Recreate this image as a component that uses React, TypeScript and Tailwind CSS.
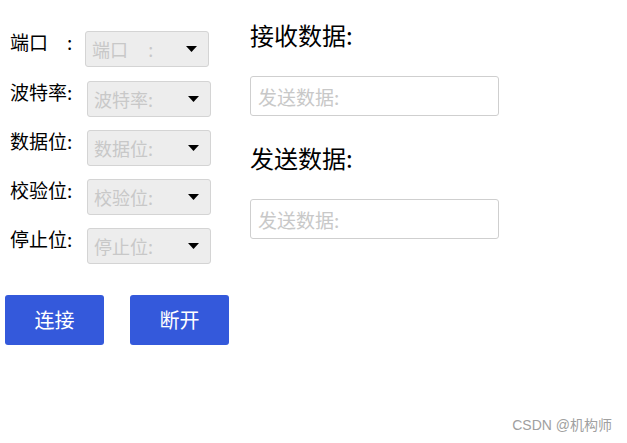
import React from "react";

const font = { fontFamily: '"Noto Sans CJK SC", "Noto Sans", sans-serif' };

function Arrow() {
  return (
    <svg width="11" height="6" viewBox="0 0 11 6" className="shrink-0">
      <path d="M0 0 L11 0 L5.5 6 Z" fill="#000" />
    </svg>
  );
}

function FakeSelect({ text }: { text: string }) {
  return (
    <div className="flex h-[36px] w-[124px] items-center justify-between rounded-[3px] border border-[#d4d4d4] bg-[#ededed] pl-[6px] pr-[11px]">
      <span className="whitespace-pre text-[18px] leading-none text-[#c8c8c8]">{text}</span>
      <Arrow />
    </div>
  );
}

const rows = [
  { label: "波特率:", ph: "波特率:" },
  { label: "数据位:", ph: "数据位:" },
  { label: "校验位:", ph: "校验位:" },
  { label: "停止位:", ph: "停止位:" },
];

export default function App() {
  return (
    <div className="relative h-[443px] w-[627px] bg-white text-black" style={font}>
      <div className="flex">
        {/* left: serial settings */}
        <div className="flex flex-col pl-[5px] pt-[31px]">
          <div className="flex items-start pl-[5px]">
            <span className="mt-px flex w-[75px] text-[19px] leading-none">
              <span>端口</span>
              <span className="ml-[19px]">:</span>
            </span>
            <FakeSelect text={"端口     :"} />
          </div>
          {rows.map((r, i) => (
            <div key={r.label} className={`flex items-start pl-[5px] ${i === 0 ? "mt-[14px]" : "mt-[13px]"}`}>
              <span className="mt-px w-[77px] text-[19px] leading-none">{r.label}</span>
              <FakeSelect text={r.ph} />
            </div>
          ))}
          <div className="mt-[31px] flex gap-[26px]">
            <button className="flex h-[50px] w-[99px] items-center justify-center rounded-[3px] bg-[#3459db] text-[20px] leading-none text-white">
              连接
            </button>
            <button className="flex h-[50px] w-[99px] items-center justify-center rounded-[3px] bg-[#3459db] text-[20px] leading-none text-white">
              断开
            </button>
          </div>
        </div>

        {/* right: data */}
        <div className="ml-[21px] flex flex-col pt-[23px]">
          <h2 className="text-[24px] leading-none">接收数据:</h2>
          <input
            className="mt-[29px] h-[40px] w-[249px] rounded-[3px] border border-[#cfcfcf] px-[7px] text-[19px] outline-none placeholder:text-[#c8c8c8]"
            placeholder="发送数据:"
            style={font}
          />
          <h2 className="mt-[30px] text-[24px] leading-none">发送数据:</h2>
          <input
            className="mt-[29px] h-[40px] w-[249px] rounded-[3px] border border-[#cfcfcf] px-[7px] text-[19px] outline-none placeholder:text-[#c8c8c8]"
            placeholder="发送数据:"
            style={font}
          />
        </div>
      </div>

      {/* watermark */}
      <div
        className="absolute right-[15px] top-[418px] text-[14px] leading-none text-[#a0a0a0]"
        style={{ fontFamily: '"Liberation Sans", "Noto Sans CJK SC", sans-serif' }}
      >
        CSDN @机构师
      </div>
    </div>
  );
}
